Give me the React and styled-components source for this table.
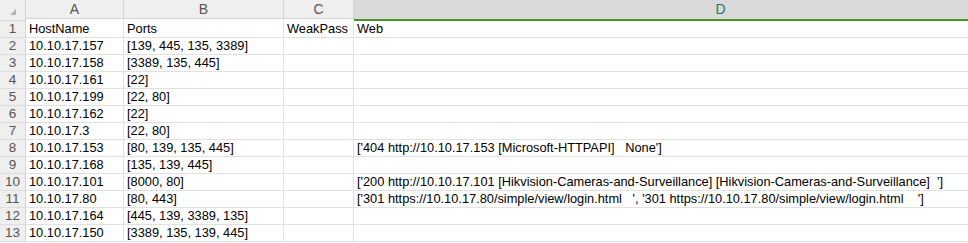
import React from "react";
import styled, { createGlobalStyle } from "styled-components";

const Global = createGlobalStyle`
  html, body { margin: 0; padding: 0; background: #fff; overflow: hidden; }
  body { width: 968px; height: 243px; font-family: "Liberation Sans", Arial, sans-serif; }
`;

const Sheet = styled.div`
  display: grid;
  grid-template-columns: 26px 98px 160px 70px 734px;
  grid-template-rows: 21px repeat(13, 17px);
  width: 968px;
  height: 243px;
  overflow: hidden;
  font-family: "Liberation Sans", Arial, sans-serif;
  font-size: 12.8px;
  color: #000;
`;

const Corner = styled.div`
  background: #efefef;
  border-right: 1px solid #d4d4d4;
  border-bottom: 1px solid #d4d4d4;
  box-sizing: border-box;
  display: flex;
  align-items: flex-start;
  justify-content: flex-start;
  padding: 9px 0 0 10px;
`;

const ColHead = styled.div`
  box-sizing: border-box;
  background: ${(p) => (p.$selected ? "#d9d9d9" : "#efefef")};
  border-right: 1px solid ${(p) => (p.$selected ? "#d9d9d9" : "#d4d4d4")};
  border-bottom: 2px solid ${(p) => (p.$selected ? "#47962b" : "#ffffff")};
  box-shadow: ${(p) => (p.$selected ? "none" : "inset 0 -1px 0 #d4d4d4")};
  color: ${(p) => (p.$selected ? "#1f7a5c" : "#555")};
  font-size: 14px;
  display: flex;
  align-items: center;
  justify-content: center;
  padding-bottom: 1px;
  white-space: nowrap;
`;

const RowHead = styled.div`
  box-sizing: border-box;
  background: #efefef;
  border-right: 1px solid #d4d4d4;
  border-bottom: 1px solid #dedede;
  color: #555;
  font-size: 13.5px;
  display: flex;
  align-items: center;
  justify-content: center;
  line-height: 16px;
`;

const Cell = styled.div`
  box-sizing: border-box;
  border-right: ${(p) => (p.$last ? "none" : "1px solid #e1e1e1")};
  border-bottom: 1px solid #e1e1e1;
  padding: 0 0 0 3px;
  display: flex;
  align-items: center;
  white-space: pre;
  overflow: visible;
  line-height: 16px;
  position: relative;
  z-index: ${(p) => (p.$over ? 1 : 0)};
`;

const rows = [
  ["HostName", "Ports", "WeakPass", "Web"],
  ["10.10.17.157", "[139, 445, 135, 3389]", "", ""],
  ["10.10.17.158", "[3389, 135, 445]", "", ""],
  ["10.10.17.161", "[22]", "", ""],
  ["10.10.17.199", "[22, 80]", "", ""],
  ["10.10.17.162", "[22]", "", ""],
  ["10.10.17.3", "[22, 80]", "", ""],
  ["10.10.17.153", "[80, 139, 135, 445]", "", "['404 http://10.10.17.153 [Microsoft-HTTPAPI]   None']"],
  ["10.10.17.168", "[135, 139, 445]", "", ""],
  ["10.10.17.101", "[8000, 80]", "", "['200 http://10.10.17.101 [Hikvision-Cameras-and-Surveillance] [Hikvision-Cameras-and-Surveillance]  ']"],
  ["10.10.17.80", "[80, 443]", "", "['301 https://10.10.17.80/simple/view/login.html   ', '301 https://10.10.17.80/simple/view/login.html    ']"],
  ["10.10.17.164", "[445, 139, 3389, 135]", "", ""],
  ["10.10.17.150", "[3389, 135, 139, 445]", "", ""],
];

const Triangle = () => (
  <svg width="6" height="6" viewBox="0 0 6 6">
    <polygon points="6,0 6,6 0,6" fill="#b5b5b5" />
  </svg>
);

export default function App() {
  return (
    <>
      <Global />
      <Sheet>
        <Corner>
          <Triangle />
        </Corner>
        {["A", "B", "C", "D"].map((c) => (
          <ColHead key={c} $selected={c === "D"}>
            {c}
          </ColHead>
        ))}
        {rows.map((r, i) => (
          <React.Fragment key={i}>
            <RowHead>{i + 1}</RowHead>
            {r.map((v, j) => (
              <Cell key={j} $last={j === 3} $over={j === 2 && v.length > 0}>
                {v}
              </Cell>
            ))}
          </React.Fragment>
        ))}
      </Sheet>
    </>
  );
}
